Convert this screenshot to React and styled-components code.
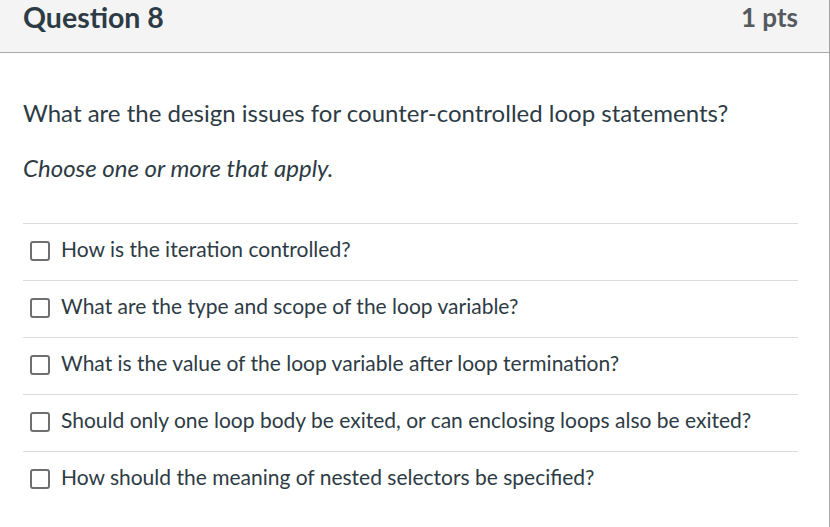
import React from 'react'
import styled, { createGlobalStyle } from 'styled-components'

const GlobalStyle = createGlobalStyle`
  html, body {
    margin: 0;
    padding: 0;
    background: #fff;
  }
  body {
    font-family: Lato, "Noto Sans", sans-serif;
    color: #2d3b45;
  }
`

const Card = styled.div`
  width: 829px;
  height: 527px;
  border-right: 1px solid #a5a5a5;
  background: #fff;
  overflow: hidden;
`

const Header = styled.div`
  height: 53px;
  box-sizing: border-box;
  background: #f4f4f4;
  border-bottom: 1px solid #a9a9a9;
  display: flex;
  justify-content: space-between;
  align-items: flex-start;
  padding: 0 31px 0 23px;
`

const Title = styled.h2`
  margin: 0;
  font-size: 28.5px;
  font-weight: 700;
  line-height: 34px;
  color: #2d3b45;
`

const Points = styled.div`
  font-size: 26px;
  font-weight: 700;
  line-height: 34px;
  color: #555a5e;
`

const Body = styled.div`
  padding: 0 31px 0 23px;
`

const Question = styled.p`
  margin: 45px 0 0;
  font-size: 24px;
  line-height: 30px;
`

const Hint = styled.p`
  margin: 25px 0 0;
  font-size: 24px;
  line-height: 30px;
  font-style: italic;
`

const Answers = styled.div`
  margin-top: 40px;
  border-top: 1px solid #dcdcdc;
`

const Answer = styled.label`
  display: flex;
  align-items: center;
  gap: 11px;
  height: 57px;
  box-sizing: border-box;
  padding: 0 0 8px 7px;
  border-bottom: 1px solid ${({ last }) => (last ? 'transparent' : '#dcdcdc')};
  font-size: 21px;
`

const Box = styled.span`
  width: 16px;
  height: 16px;
  border: 2px solid #6f6f6f;
  border-radius: 3px;
  flex: none;
  margin-top: 5px;
`

const answers = [
  'How is the iteration controlled?',
  'What are the type and scope of the loop variable?',
  'What is the value of the loop variable after loop termination?',
  'Should only one loop body be exited, or can enclosing loops also be exited?',
  'How should the meaning of nested selectors be specified?',
]

export default function App() {
  return (
    <>
      <GlobalStyle />
      <Card>
        <Header>
          <Title>Question 8</Title>
          <Points>1 pts</Points>
        </Header>
        <Body>
          <Question>What are the design issues for counter-controlled loop statements?</Question>
          <Hint>Choose one or more that apply.</Hint>
          <Answers>
            {answers.map((a, i) => (
              <Answer key={i} last={i === answers.length - 1}>
                <Box />
                {a}
              </Answer>
            ))}
          </Answers>
        </Body>
      </Card>
    </>
  )
}
